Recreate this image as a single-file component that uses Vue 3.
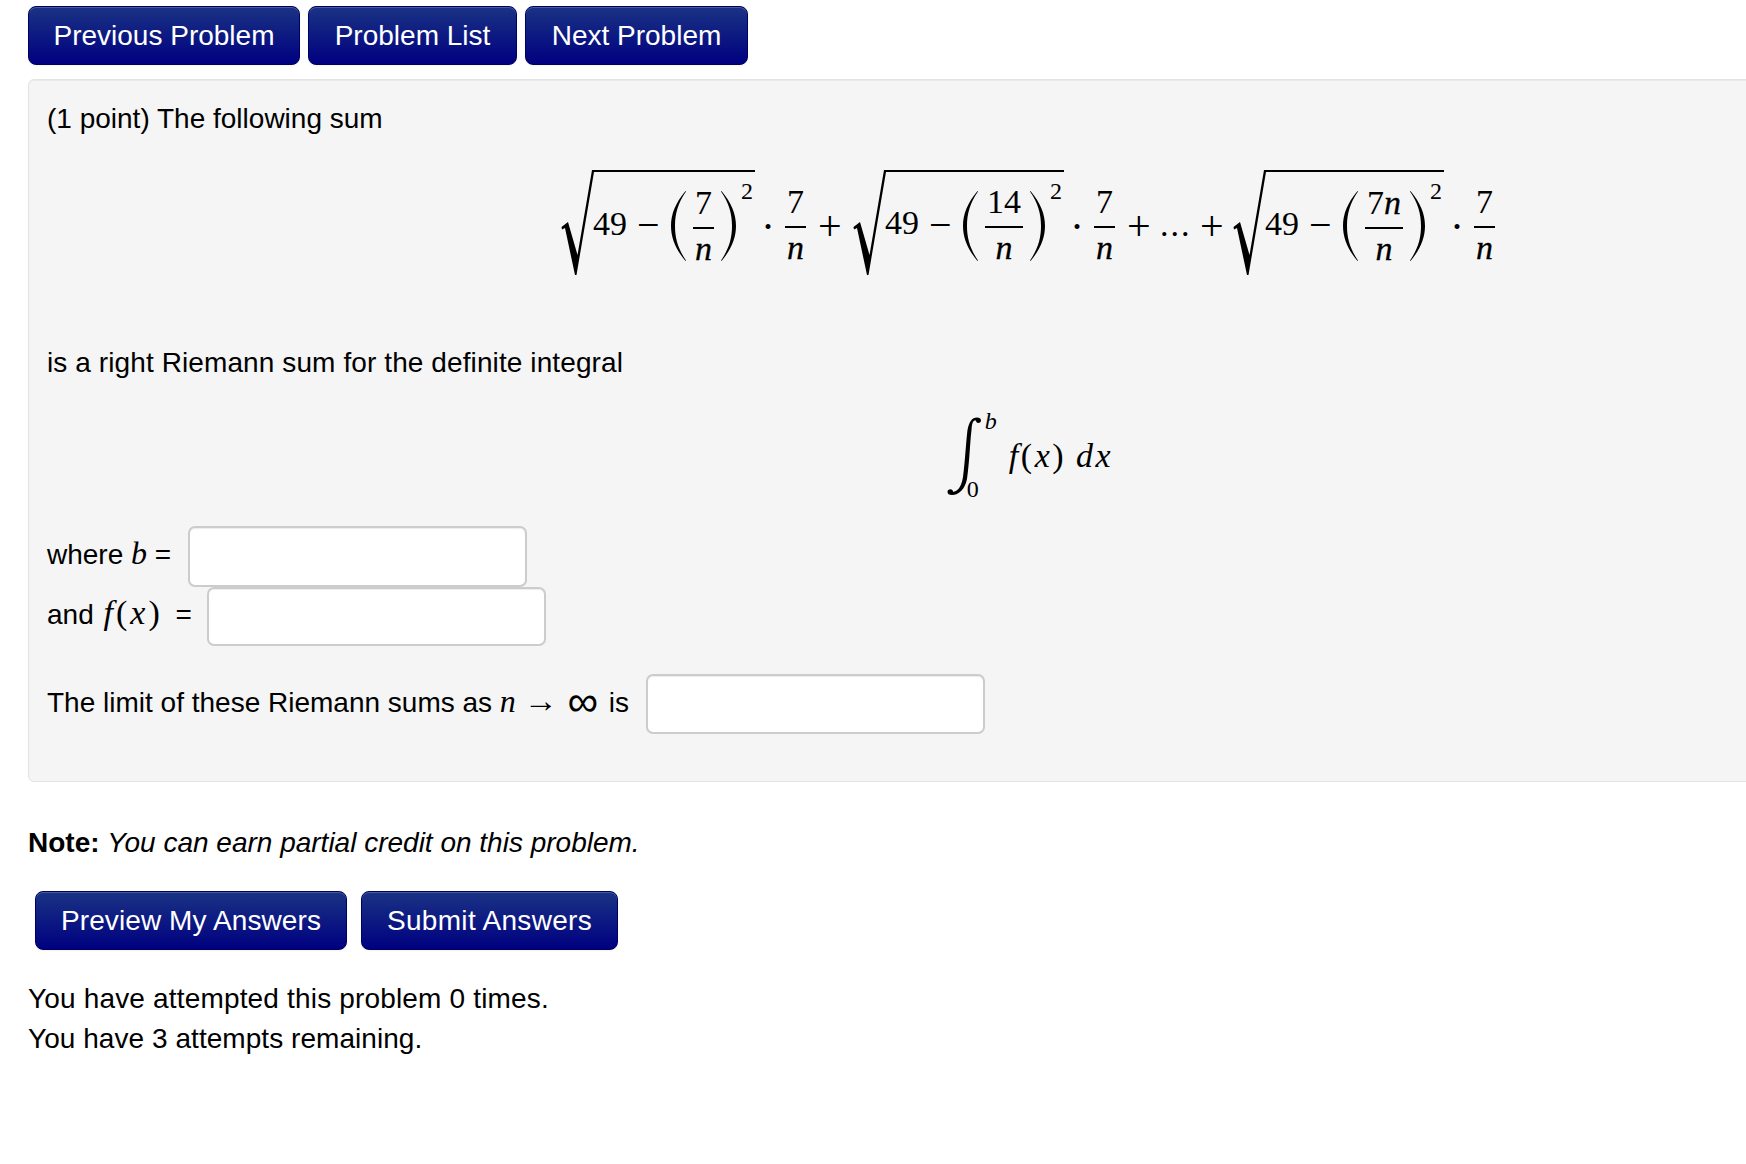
<script setup>
const navButtons = ['Previous Problem', 'Problem List', 'Next Problem']
const actionButtons = ['Preview My Answers', 'Submit Answers']
const terms = [
  { digits: '7', variable: '', top: false },
  { digits: '14', variable: '', top: true },
  { digits: '7', variable: 'n', top: false }
]
const radical = 'M0.5 57 L7 52 L16.5 85 L31 0 H34 V2 H33 L15.5 105 H14 L4 58 L1 59.5 Z'
const paren = 'M14.5 0 L15 .6 C7 12 4 23 4 35 C4 47 7 58 15 69.4 L14.5 70 C4.5 58 0 47 0 35 C0 23 4.5 12 14.5 0Z'
const integral = 'M34 3.5 C34 5.1 32.8 6 31.5 6 C29.8 6 29 4.9 29 3.6 C26.5 3 25 5 24.5 13 C23 25 22.5 45 20 62 C18 72 12 78 5 78 C2 78 .5 76.8 .5 75 C.5 73.4 1.8 72.3 3.3 72.3 C5 72.3 6 73.4 6 74.7 C9 75 14 72 16 60 C18 45 19 25 20.5 13 C22 5 25 .5 30 .5 C32.5 .5 34 1.6 34 3.5Z'
</script>

<template>
  <div class="page">
    <nav class="nav">
      <button v-for="label in navButtons" :key="label" class="btn">{{ label }}</button>
    </nav>

    <section class="well">
      <p class="line">(1 point) The following sum</p>

      <div class="equation">
        <template v-for="(term, i) in terms" :key="i">
          <span v-if="i === 1" class="op plus first-plus">+</span>
          <span v-if="i === 2" class="op plus">+</span>
          <span v-if="i === 2" class="op dots">...</span>
          <span v-if="i === 2" class="op plus">+</span>
          <span class="sqrt" :class="{ high: term.top }">
            <svg class="radical" width="34" height="105" viewBox="0 0 34 105"><path :d="radical" /></svg>
            <span class="radicand">
              <span class="num49">49</span>
              <span class="op minus">−</span>
              <svg class="paren" width="15" height="70" viewBox="0 0 15 70"><path :d="paren" /></svg>
              <span class="frac inner">
                <span class="frac-top">{{ term.digits }}<i v-if="term.variable">{{ term.variable }}</i></span>
                <span class="frac-bottom"><i>n</i></span>
              </span>
              <svg class="paren flip" width="15" height="70" viewBox="0 0 15 70"><path :d="paren" /></svg>
              <span class="power">2</span>
            </span>
          </span>
          <span class="op cdot">·</span>
          <span class="frac">
            <span class="frac-top">7</span>
            <span class="frac-bottom"><i>n</i></span>
          </span>
        </template>
      </div>

      <p class="line riemann">is a right Riemann sum for the definite integral</p>

      <div class="integral">
        <svg class="int-sign" width="35" height="78" viewBox="0 0 35 78"><path :d="integral" /></svg>
        <span class="limits">
          <i class="upper">b</i>
          <span class="lower">0</span>
        </span>
        <span class="integrand"><i>f</i>(<i>x</i>)<i class="dx">dx</i></span>
      </div>

      <div class="answer first">
        <span class="label">where <i class="mi">b</i> =</span>
        <input class="field" type="text" />
      </div>
      <div class="answer">
        <span class="label">and <span class="func"><i>f</i>(<i>x</i>)</span> =</span>
        <input class="field" type="text" />
      </div>
      <div class="answer limit">
        <span class="label">The limit of these Riemann sums as <i class="mi">n</i> <span class="arrow">→</span> <span class="infinity">∞</span> is</span>
        <input class="field" type="text" />
      </div>
    </section>

    <p class="line note"><b>Note:</b> <em>You can earn partial credit on this problem.</em></p>

    <div class="actions">
      <button v-for="label in actionButtons" :key="label" class="btn">{{ label }}</button>
    </div>

    <p class="line attempts">You have attempted this problem 0 times.</p>
    <p class="line attempts-left">You have 3 attempts remaining.</p>
  </div>
</template>

<style scoped>
.page {
  width: 2100px;
  padding: 6px 0 0 28px;
  box-sizing: border-box;
  font-family: "Liberation Sans", Arial, sans-serif;
  font-size: 28px;
  line-height: 40px;
  color: #000;
}
.line { margin: 0; }

.nav { display: flex; gap: 8px; }
.nav .btn:nth-child(1) { width: 272px; }
.nav .btn:nth-child(2) { width: 209px; }
.nav .btn:nth-child(3) { width: 223px; }
.actions { display: flex; gap: 14px; margin: 28px 0 0 7px; }
.actions .btn { letter-spacing: .1px; }
.actions .btn:nth-child(1) { width: 312px; }
.actions .btn:nth-child(2) { width: 257px; letter-spacing: .3px; }
.btn {
  box-sizing: border-box;
  height: 59px;
  padding: 0;
  border: 1px solid #00005e;
  border-radius: 8px;
  background: linear-gradient(#1a3384, #000080);
  box-shadow: inset 0 1px 0 rgba(255, 255, 255, .2), 0 1px 2px rgba(0, 0, 0, .05);
  color: #fff;
  font: inherit;
}

.well {
  box-sizing: border-box;
  width: 2000px;
  height: 703px;
  margin-top: 14px;
  padding: 19px 18px 0;
  border: 1px solid #e3e3e3;
  border-radius: 6px;
  background: #f5f5f5;
  box-shadow: inset 0 1px 1px rgba(0, 0, 0, .05);
}

.equation {
  display: flex;
  justify-content: center;
  align-items: center;
  height: 110px;
  margin-top: 31px;
  font-family: "Liberation Serif", "Times New Roman", serif;
  font-size: 34px;
  line-height: 34px;
}
.equation i { -webkit-text-stroke: .3px #000; }
.sqrt { display: flex; height: 110px; }
.radical { flex: none; }
.radical path, .paren path, .int-sign path { fill: #000; }
.radicand {
  display: flex;
  align-items: center;
  box-sizing: border-box;
  height: 110px;
  margin-left: -2px;
  padding-right: 2px;
  border-top: 2px solid #000;
}
.high { margin-top: -1px; }
.num49 { padding-bottom: 5px; }
.op { flex: none; text-align: center; }
.minus { width: 20px; margin: 0 14px 0 10px; font-size: 40px; padding-bottom: 2px; }
.plus { width: 21px; margin: 0 12px; padding-top: 2px; font-size: 42px; }
.first-plus { margin: 0 14px 0 12px; }
.dots { width: 28px; letter-spacing: 2px; }
.cdot { width: 8px; margin: 0 16px 0 6px; padding-top: 4px; font-size: 42px; }
.paren { flex: none; }
.flip { transform: scaleX(-1); margin-left: 7px; }
.inner { margin-left: 7px; }
.frac {
  display: flex;
  flex-direction: column;
  align-items: stretch;
  flex: none;
  box-sizing: border-box;
  min-width: 20px;
  padding-top: 2px;
  text-align: center;
}
.frac-top {
  padding: 0 2px 7px;
  border-bottom: 2px solid #000;
  white-space: nowrap;
}
.frac-bottom { padding: 3px 0; }
.power {
  align-self: flex-start;
  margin: 7px 0 0 5px;
  font-size: 24px;
  line-height: 24px;
}

.riemann { margin-top: 63px; letter-spacing: .1px; }

.integral {
  display: flex;
  justify-content: center;
  height: 81px;
  margin-top: 34px;
  font-family: "Liberation Serif", "Times New Roman", serif;
  font-size: 34px;
  line-height: 34px;
}
.int-sign { flex: none; }
.limits {
  display: flex;
  flex-direction: column;
  justify-content: space-between;
  width: 30px;
  margin-left: -15px;
  font-size: 24px;
  line-height: 24px;
}
.upper { margin-left: 18px; margin-top: -8px; }
.lower { margin-bottom: -3px; }
.integrand { margin: 22px -4px 0 12px; letter-spacing: 2.5px; white-space: nowrap; }
.dx { margin-left: 10px; }

.answer {
  display: flex;
  align-items: center;
  height: 59px;
}
.first { height: 61px; margin-top: 28px; }
.limit { height: 60px; margin-top: 28px; }
.label { padding-bottom: 3px; }
.mi { font-family: "Liberation Serif", "Times New Roman", serif; font-size: 32px; line-height: 0; }
.func {
  margin: 0 5px 0 2px;
  font-family: "Liberation Serif", "Times New Roman", serif;
  font-size: 34px;
  line-height: 0;
  letter-spacing: 3px;
}
.arrow { font-size: 34px; line-height: 0; }
.infinity { margin: 0 3px 0 2px; font-size: 43px; line-height: 0; vertical-align: -4px; }
.field {
  flex: none;
  box-sizing: border-box;
  width: 339px;
  height: 100%;
  margin-left: 17px;
  border: 2px solid #ccc;
  border-radius: 7px;
  background: #fff;
  box-shadow: inset 0 1px 1px rgba(0, 0, 0, .075);
  outline: none;
}
.answer:nth-of-type(4) .field { margin-left: 15px; }

.note { margin-top: 41px; }
.attempts { margin-top: 29px; letter-spacing: .17px; }
.attempts-left { letter-spacing: .05px; }
</style>

<style>
html, body { overflow-x: hidden; background: #fff; }
</style>
